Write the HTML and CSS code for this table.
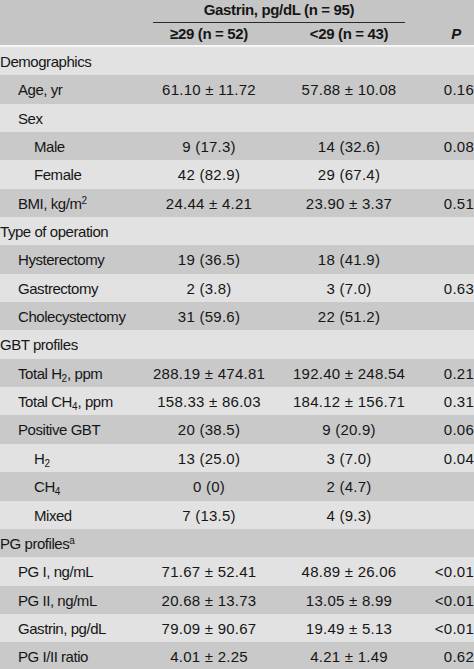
FILE: index.html
```html
<!DOCTYPE html>
<html lang="en">
<head>
<meta charset="utf-8">
<title>Gastrin table</title>
<link rel="stylesheet" href="styles.css">
</head>
<body>
<div class="tbl" role="table">
  <div class="thead">
    <div class="row h1" role="row">
      <div class="c1"></div>
      <div class="span">Gastrin, pg/dL (n = 95)</div>
      <div class="cp"></div>
    </div>
    <div class="row h2" role="row">
      <div class="c1"></div>
      <div class="c2">≥29 (n = 52)</div>
      <div class="c3">&lt;29 (n = 43)</div>
      <div class="cp"><i>P</i></div>
    </div>
  </div>
  <div class="tbody">
    <div class="row light"><div class="c1">Demographics</div><div class="c2"></div><div class="c3"></div><div class="cp"></div></div>
    <div class="row dark"><div class="c1 l1">Age, yr</div><div class="c2">61.10 ± 11.72</div><div class="c3">57.88 ± 10.08</div><div class="cp">0.16</div></div>
    <div class="row light"><div class="c1 l1">Sex</div><div class="c2"></div><div class="c3"></div><div class="cp"></div></div>
    <div class="row dark"><div class="c1 l2">Male</div><div class="c2">9 (17.3)</div><div class="c3">14 (32.6)</div><div class="cp">0.08</div></div>
    <div class="row light"><div class="c1 l2">Female</div><div class="c2">42 (82.9)</div><div class="c3">29 (67.4)</div><div class="cp"></div></div>
    <div class="row dark"><div class="c1 l1">BMI, kg/m<sup>2</sup></div><div class="c2">24.44 ± 4.21</div><div class="c3">23.90 ± 3.37</div><div class="cp">0.51</div></div>
    <div class="row light"><div class="c1">Type of operation</div><div class="c2"></div><div class="c3"></div><div class="cp"></div></div>
    <div class="row dark"><div class="c1 l1">Hysterectomy</div><div class="c2">19 (36.5)</div><div class="c3">18 (41.9)</div><div class="cp"></div></div>
    <div class="row light"><div class="c1 l1">Gastrectomy</div><div class="c2">2 (3.8)</div><div class="c3">3 (7.0)</div><div class="cp">0.63</div></div>
    <div class="row dark"><div class="c1 l1">Cholecystectomy</div><div class="c2">31 (59.6)</div><div class="c3">22 (51.2)</div><div class="cp"></div></div>
    <div class="row light"><div class="c1">GBT profiles</div><div class="c2"></div><div class="c3"></div><div class="cp"></div></div>
    <div class="row dark"><div class="c1 l1">Total H<sub>2</sub>, ppm</div><div class="c2">288.19 ± 474.81</div><div class="c3">192.40 ± 248.54</div><div class="cp">0.21</div></div>
    <div class="row light"><div class="c1 l1">Total CH<sub>4</sub>, ppm</div><div class="c2">158.33 ± 86.03</div><div class="c3">184.12 ± 156.71</div><div class="cp">0.31</div></div>
    <div class="row dark"><div class="c1 l1">Positive GBT</div><div class="c2">20 (38.5)</div><div class="c3">9 (20.9)</div><div class="cp">0.06</div></div>
    <div class="row light"><div class="c1 l2">H<sub>2</sub></div><div class="c2">13 (25.0)</div><div class="c3">3 (7.0)</div><div class="cp">0.04</div></div>
    <div class="row dark"><div class="c1 l2">CH<sub>4</sub></div><div class="c2">0 (0)</div><div class="c3">2 (4.7)</div><div class="cp"></div></div>
    <div class="row light"><div class="c1 l2">Mixed</div><div class="c2">7 (13.5)</div><div class="c3">4 (9.3)</div><div class="cp"></div></div>
    <div class="row dark"><div class="c1">PG profiles<sup>a</sup></div><div class="c2"></div><div class="c3"></div><div class="cp"></div></div>
    <div class="row light"><div class="c1 l1">PG I, ng/mL</div><div class="c2">71.67 ± 52.41</div><div class="c3">48.89 ± 26.06</div><div class="cp">&lt;0.01</div></div>
    <div class="row dark"><div class="c1 l1">PG II, ng/mL</div><div class="c2">20.68 ± 13.73</div><div class="c3">13.05 ± 8.99</div><div class="cp">&lt;0.01</div></div>
    <div class="row light"><div class="c1 l1">Gastrin, pg/dL</div><div class="c2">79.09 ± 90.67</div><div class="c3">19.49 ± 5.13</div><div class="cp">&lt;0.01</div></div>
    <div class="row dark"><div class="c1 l1">PG I/II ratio</div><div class="c2">4.01 ± 2.25</div><div class="c3">4.21 ± 1.49</div><div class="cp">0.62</div></div>
  </div>
</div>
</body>
</html>
```

FILE: styles.css
```css
html, body {
  margin: 0;
  padding: 0;
  overflow: hidden;
  background: #f7f7f7;
}
body {
  font-family: "Liberation Sans", Arial, sans-serif;
  font-size: 15px;
  color: #161616;
}
.tbl {
  width: 474px;
}
.row {
  display: grid;
  grid-template-columns: 153px 126px 126px 69px;
  white-space: nowrap;
}
.thead {
  background: #c5c5c5;
  font-weight: bold;
  letter-spacing: -0.35px;
}
.h1 {
  height: 23px;
}
.h1 .span {
  grid-column: 2 / 4;
  text-align: center;
  line-height: 20px;
  padding-bottom: 2px;
  border-bottom: 1px solid #2a2a2a;
}
.h2 {
  height: 21.5px;
  line-height: 21.5px;
}
.h2 .cp {
  text-align: right;
  padding-right: 13px;
}
.h2 .cp i {
  font-style: italic;
}
.tbody {
  margin-top: 2.5px;
}
.tbody .row {
  height: 28.35px;
  box-sizing: border-box;
  padding-top: 2px;
  line-height: 26.35px;
}
.light {
  background: #e2e2e2;
}
.dark {
  background: #c9c9c9;
}
.c1 {
  letter-spacing: -0.45px;
}
.l1 {
  padding-left: 18px;
}
.l2 {
  padding-left: 34px;
}
.c2 {
  text-align: center;
  padding-right: 14px;
}
.c3 {
  text-align: center;
  padding-left: 14px;
}
.tbody .c2, .tbody .c3, .tbody .cp {
  letter-spacing: 0.25px;
}
.tbody .cp {
  text-align: right;
  padding-right: 0;
}
sup, sub {
  font-size: 10px;
  line-height: 0;
  letter-spacing: 0;
}
sup {
  vertical-align: 5px;
}
sub {
  vertical-align: -3px;
}
```
